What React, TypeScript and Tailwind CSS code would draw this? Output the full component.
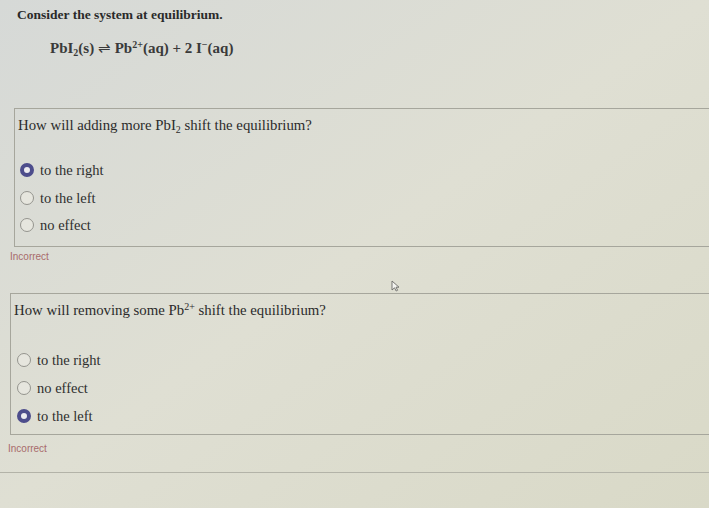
import React from 'react';

type Choice = { label: string; selected?: boolean };

const Radio: React.FC<{ selected?: boolean }> = ({ selected }) =>
  selected ? (
    <span className="inline-block h-[14px] w-[14px] shrink-0 rounded-full border-[4px] border-[#4d4d8c] bg-[#ecebf0]" />
  ) : (
    <span className="inline-block h-[14px] w-[14px] shrink-0 rounded-full border-[1.5px] border-[#94948e] bg-[#e6e6de]" />
  );

const ChoiceRow: React.FC<{ choice: Choice; indent: string; h: string }> = ({ choice, indent, h }) => (
  <div className={`flex items-center gap-[6px] ${indent} ${h}`}>
    <Radio selected={choice.selected} />
    <span className="text-[14.5px] leading-[16px] text-[#2f2f2f]">{choice.label}</span>
  </div>
);

const Incorrect: React.FC<{ className: string }> = ({ className }) => (
  <div
    className={`h-[12px] text-[10px] leading-[12px] text-[#a86b6b] ${className}`}
    style={{ fontFamily: '"Liberation Sans", Arial, sans-serif' }}
  >
    Incorrect
  </div>
);

export default function App() {
  const first: Choice[] = [
    { label: 'to the right', selected: true },
    { label: 'to the left' },
    { label: 'no effect' },
  ];
  const second: Choice[] = [
    { label: 'to the right' },
    { label: 'no effect' },
    { label: 'to the left', selected: true },
  ];

  return (
    <div
      className="relative h-[508px] w-[709px] overflow-hidden bg-linear-to-br from-[#d6d9d7] via-[#dfdfd3] to-[#d9d9c7] text-[#2b2b2b]"
      style={{ fontFamily: '"Liberation Serif", "Times New Roman", serif' }}
    >
      {/* intro */}
      <div className="h-[108px] pt-[7px]">
        <div className="ml-[17px] h-[16px] text-[13.5px] font-bold leading-[16px] text-[#2a2a2a]">
          Consider the system at equilibrium.
        </div>
        <div className="ml-[50px] mt-[17px] h-[16px] text-[15px] font-bold leading-[16px] text-[#3a3a3a]">
          PbI<sub className="text-[10px] leading-none">2</sub>(s) <span className="font-normal">⇌</span> Pb
          <sup className="text-[10px] leading-none">2+</sup>(aq) + 2 I<sup className="text-[10px] leading-none">−</sup>(aq)
        </div>
      </div>

      {/* question 1 */}
      <div className="ml-[14px] border-y border-l border-[#a6a69c]">
        <div className="ml-[3px] mt-[7px] h-[18px] text-[14.8px] leading-[18px] text-[#2b2b2b]">
          How will adding more PbI<sub className="text-[10px] leading-none">2</sub> shift the equilibrium?
        </div>
        <div className="mb-[7px] mt-[22px]">
          <ChoiceRow choice={first[0]} indent="ml-[5px]" h="h-[28px]" />
          <ChoiceRow choice={first[1]} indent="ml-[5px]" h="h-[27px]" />
          <ChoiceRow choice={first[2]} indent="ml-[5px]" h="h-[28px]" />
        </div>
      </div>
      <Incorrect className="ml-[10px] mt-[4px]" />

      {/* question 2 */}
      <div className="ml-[10px] mt-[30px] border-y border-l border-[#a6a69c]">
        <div className="ml-[3px] mt-[7px] h-[18px] text-[14.8px] leading-[18px] text-[#2b2b2b]">
          How will removing some Pb<sup className="text-[10px] leading-none">2+</sup> shift the equilibrium?
        </div>
        <div className="mb-[4px] mt-[27px]">
          <ChoiceRow choice={second[0]} indent="ml-[6px]" h="h-[28px]" />
          <ChoiceRow choice={second[1]} indent="ml-[6px]" h="h-[28px]" />
          <ChoiceRow choice={second[2]} indent="ml-[6px]" h="h-[28px]" />
        </div>
      </div>
      <Incorrect className="ml-[8px] mt-[8px]" />

      <div className="mt-[17px] border-t border-[#b3b3a8]" />

      {/* mouse pointer */}
      <svg className="absolute left-[391px] top-[280px]" width="9" height="12" viewBox="0 0 9 12">
        <path d="M1 1 L1 10 L3.5 7.8 L5.2 11 L6.6 10.3 L5 7.2 L8 7.2 Z" fill="#f4f4f0" stroke="#6a6a66" strokeWidth="0.9" />
      </svg>
    </div>
  );
}
